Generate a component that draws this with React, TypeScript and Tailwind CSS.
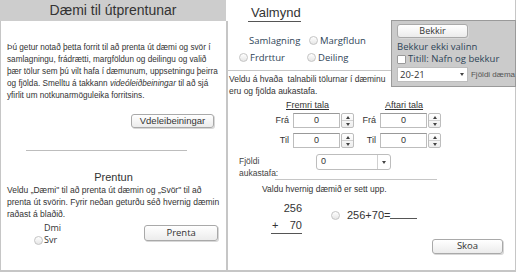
import React from "react";

const sans = "font-['Liberation_Sans',Arial,sans-serif]";
const open = "font-['Open_Sans','Noto_Sans',sans-serif]";

function Radio({ className = "" }: { className?: string }) {
  return (
    <span
      className={`inline-block w-[9px] h-[9px] rounded-full border border-[#c4c4c4] bg-gradient-to-b from-white to-[#e6e6e6] ${className}`}
    />
  );
}

function Btn({ label, className = "" }: { label: string; className?: string }) {
  return (
    <div
      className={`flex items-center justify-center rounded-[3px] border border-[#a9a9a9] bg-gradient-to-b from-white to-[#ececec] text-[#333] shadow-[1px_1px_0_#d8d8d8] ${className}`}
    >
      {label}
    </div>
  );
}

function Spinner() {
  return (
    <div className="flex flex-col w-[13px] h-[15px] border border-[#bdbdbd] rounded-[2px] bg-gradient-to-b from-white to-[#eee]">
      <div className="flex-1 flex items-center justify-center border-b border-[#d0d0d0]">
        <span className="block w-0 h-0 border-l-[2.5px] border-r-[2.5px] border-b-[3px] border-l-transparent border-r-transparent border-b-[#444]" />
      </div>
      <div className="flex-1 flex items-center justify-center">
        <span className="block w-0 h-0 border-l-[2.5px] border-r-[2.5px] border-t-[3px] border-l-transparent border-r-transparent border-t-[#444]" />
      </div>
    </div>
  );
}

function NumInput() {
  return (
    <div className="flex items-center gap-[1px]">
      <div className="w-[47px] h-[15px] border border-[#bdbdbd] border-t-[#999] bg-white flex items-center justify-center text-[9px] text-[#333]">
        0
      </div>
      <Spinner />
    </div>
  );
}

function Caret() {
  return (
    <span className="block w-0 h-0 border-l-[2.5px] border-r-[2.5px] border-t-[3px] border-l-transparent border-r-transparent border-t-[#444]" />
  );
}

export default function App() {
  return (
    <div className={`w-[516px] h-[272px] flex bg-white overflow-hidden ${sans}`}>
      {/* --- Left: Dæmi til útprentunar --- */}
      <div className="w-[228px] h-[272px] flex flex-col">
        <div className="h-[21px] bg-[#cdcdcd] flex items-center justify-center text-[14px] text-[#333] mr-[2px]">
          Dæmi til útprentunar
        </div>
        <div className="flex-1 flex flex-col border-l border-r-2 border-b-2 border-[#c6c6c6]">
          <p className="mt-[21px] px-[6px] text-[8.2px] leading-[12px] text-[#333] whitespace-nowrap">
            Þú getur notað þetta forrit til að prenta út dæmi og svör í
            <br />
            samlagningu, frádrætti, margföldun og deilingu og valið
            <br />
            þær tölur sem þú vilt hafa í dæmunum, uppsetningu þeirra
            <br />
            og fjölda. Smelltu á takkann <i>videóleiðbeiningar</i> til að sjá
            <br />
            yfirlit um notkunarmöguleika forritsins.
          </p>
          <div className="flex justify-end pr-[12px] mt-[12px]">
            <Btn label="Vdeleibeiningar" className="w-[83px] h-[14px] text-[9.5px]" />
          </div>
          <div className="mt-[22px] ml-[25px] w-[161px] h-px bg-[#bdbdbd]" />
          <div className="mt-[19px] text-center text-[11px] leading-[14px] text-[#333]">Prentun</div>
          <p className="px-[6px] text-[8.5px] leading-[12px] text-[#333]">
            Veldu „Dæmi" til að prenta út dæmin og „Svör" til að prenta út svörin. Fyrir neðan
            geturðu séð hvernig dæmin raðast á blaðið.
          </p>
          <div className="flex mt-[2px]">
            <div className={`flex flex-col ml-[33px] text-[9px] leading-[12px] text-[#333] ${open}`}>
              <span className="ml-[10px]">Dmi</span>
              <span className="flex items-center gap-[1px]">
                <Radio />
                Svr
              </span>
            </div>
            <Btn label="Prenta" className={`ml-[83px] mt-[3px] w-[74px] h-[16px] text-[9.5px] ${open}`} />
          </div>
        </div>
      </div>

      {/* --- Right: Valmynd --- */}
      <div className="relative flex-1 h-[272px] flex flex-col border-r border-b-2 border-[#c6c6c6]">
        <div className="mt-[5px] ml-[20px] w-[53px] border-b border-[#555] text-[13px] leading-[16px] text-[#333] pl-[3px]">
          Valmynd
        </div>

        <div className={`grid grid-cols-[70px_80px] mt-[12px] ml-[11px] gap-y-[4px] text-[9.5px] leading-[13px] text-[#2f4558] ${open}`}>
          <span className="ml-[10px]">Samlagning</span>
          <span className="flex items-center gap-[2px]">
            <Radio />
            Margfldun
          </span>
          <span className="flex items-center gap-[2px]">
            <Radio />
            Frdrttur
          </span>
          <span className="flex items-center gap-[2px] ml-[-2px]">
            <Radio />
            Deiling
          </span>
        </div>

        <div className="mt-[6px] h-px bg-[#c6c6c6]" />

        <p className="mt-[2px] pl-[1px] w-[160px] text-[8.5px] leading-[12px] text-[#333]">
          Veldu á hvaða&nbsp; talnabili tölurnar í dæminu eru og fjölda aukastafa.
        </p>

        {/* Fremri / Aftari */}
        <div className="flex mt-[3px] ml-[44px] text-[9px] text-[#333]">
          <div className="flex flex-col items-start">
            <span className="underline leading-[11px] ml-[14px]">Fremri tala</span>
            <div className="flex items-center gap-[4px] mt-[2px]">
              <span className="w-[17px] text-right">Frá</span>
              <NumInput />
            </div>
            <div className="flex items-center gap-[4px] mt-[5px]">
              <span className="w-[17px] text-right">Til</span>
              <NumInput />
            </div>
          </div>
          <div className="flex flex-col items-start ml-[6px]">
            <span className="underline leading-[11px] ml-[25px]">Aftari tala</span>
            <div className="flex items-center gap-[4px] mt-[2px]">
              <span className="w-[16px] text-right">Frá</span>
              <NumInput />
            </div>
            <div className="flex items-center gap-[4px] mt-[5px]">
              <span className="w-[16px] text-right">Til</span>
              <NumInput />
            </div>
          </div>
        </div>

        <div className="flex items-start mt-[7px] ml-[11px]">
          <span className="text-[8.5px] leading-[12px] text-[#444] w-[60px]">
            Fjöldi
            <br />
            aukastafa:
          </span>
          <div className="ml-[17px] mt-[-1px] w-[75px] h-[16px] flex items-center border border-[#bdbdbd] rounded-[3px] bg-white">
            <span className="flex-1 pl-[4px] text-[9px] text-[#333]">0</span>
            <span className="w-[13px] h-full flex items-center justify-center border-l border-[#d0d0d0]">
              <Caret />
            </span>
          </div>
        </div>

        <div className="mt-0 ml-[47px] w-[162px] h-px bg-[#c6c6c6]" />

        <p className="mt-[3px] ml-[34px] text-[8.5px] leading-[12px] text-[#333]">
          Valdu hvernig dæmið er sett upp.
        </p>

        <div className="flex items-center mt-[5px] ml-[44px] text-[11px] text-[#333]">
          <div className="flex flex-col items-end w-[30px] leading-[17px]">
            <span>256</span>
            <span className="flex w-full justify-between">
              <span>+</span>
              <span>70</span>
            </span>
            <span className="w-[31px] h-px bg-[#555] mt-[-1px]" />
          </div>
          <span className="flex items-center ml-[29px] mb-[3px] gap-[7px]">
            <Radio />
            <span>
              256+70=<span className="inline-block w-[27px] border-b border-[#555] align-baseline" />
            </span>
          </span>
        </div>

        <div className="flex justify-end mt-[5px] pr-[12px]">
          <Btn label="Skoa" className={`w-[71px] h-[15px] text-[9.5px] ${open}`} />
        </div>

        {/* --- Bekkir overlay --- */}
        <div
          className={`absolute left-[163px] top-[20px] right-[-1px] h-[67px] bg-[#cbcbcb] border border-[#9a9a9a] pl-[5px] pt-[3px] text-[9.5px] leading-[12px] text-[#2f4558] ${open}`}
        >
          <Btn label="Bekkir" className="w-[71px] h-[14px] text-[9px] text-[#2f4558]" />
          <div className="mt-[3px]">Bekkur ekki valinn</div>
          <div className="flex items-center gap-[2px]">
            <span className="w-[9px] h-[9px] border border-[#999] bg-white rounded-[1px]" />
            Titill: Nafn og bekkur
          </div>
          <div className="flex items-center mt-[2px] whitespace-nowrap">
            <div className="w-[73px] h-[15px] flex items-center border border-[#bdbdbd] bg-white">
              <span className="flex-1 pl-[2px] text-[9.5px] text-[#333]">20-21</span>
              <span className="w-[10px] h-full flex items-center justify-center">
                <Caret />
              </span>
            </div>
            <span className="ml-[3px] text-[8px] text-[#555] font-['Liberation_Sans',Arial,sans-serif]">
              Fjöldi dæma
            </span>
          </div>
        </div>
      </div>
    </div>
  );
}
